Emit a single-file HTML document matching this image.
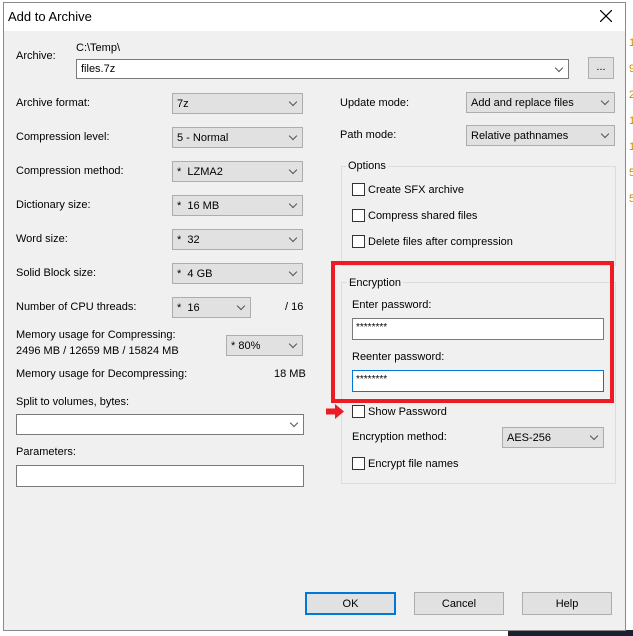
<!DOCTYPE html>
<html><head><meta charset="utf-8"><style>
*{box-sizing:border-box;margin:0;padding:0}
body{width:633px;height:636px;overflow:hidden;background:#fff;font-family:"Liberation Sans",sans-serif;font-size:11px;color:#000;position:relative}
.a{position:absolute;white-space:nowrap}
.win{position:absolute;left:3px;top:2px;width:623px;height:629px;background:#f0f0f0;border:1px solid #8a8a8a}
.title{position:absolute;left:0;top:0;width:621px;height:28px;background:#fff}
.cb{position:absolute;height:21px;background:#e1e1e1;border:1px solid #adadad;padding:4px 0 0 4px}
.cb.w{background:#fff;border-color:#7a7a7a}
.cb:after{content:"";position:absolute;right:6px;top:5px;width:5px;height:5px;border-right:1px solid #555;border-bottom:1px solid #555;transform:rotate(45deg)}
.in{position:absolute;height:22px;background:#fff;border:1px solid #7a7a7a;padding:3px 0 0 3px;font-size:10px}
.chk{position:absolute;width:13px;height:13px;background:#fff;border:1px solid #333}
.grp{position:absolute;border:1px solid #dcdcdc}
.btn{position:absolute;height:23px;background:#e1e1e1;border:1px solid #adadad;text-align:center;padding-top:5px}
</style></head><body>
<div class="a" style="left:629px;top:30px;color:#c80;font-size:11px;line-height:26px">1<br>9<br>2<br>1<br>1<br>5<br>5</div>
<div class="a" style="left:508px;top:630px;width:125px;height:6px;background:#1a2030"></div>
<div class="win">
<div class="title"></div>
</div>
<div class="a" style="left:8px;top:9px;font-size:13px">Add to Archive</div>
<svg class="a" style="left:600px;top:10px" width="12" height="12"><path d="M0 0L12 12M12 0L0 12" stroke="#000" stroke-width="1.2"/></svg>

<div class="a" style="left:16px;top:50px">Archive:</div>
<div class="a" style="left:76px;top:42px">C:\Temp\</div>
<div class="cb w" style="left:76px;top:59px;width:493px;height:20px;padding-top:3px">files.7z</div>
<div class="btn" style="left:588px;top:57px;width:26px;height:22px;padding-top:3px">...</div>

<div class="a" style="left:16px;top:97px">Archive format:</div>
<div class="cb" style="left:172px;top:93px;width:131px">7z</div>
<div class="a" style="left:16px;top:131px">Compression level:</div>
<div class="cb" style="left:172px;top:127px;width:131px">5 - Normal</div>
<div class="a" style="left:16px;top:165px">Compression method:</div>
<div class="cb" style="left:172px;top:161px;width:131px">*&nbsp; LZMA2</div>
<div class="a" style="left:16px;top:199px">Dictionary size:</div>
<div class="cb" style="left:172px;top:195px;width:131px">*&nbsp; 16 MB</div>
<div class="a" style="left:16px;top:233px">Word size:</div>
<div class="cb" style="left:172px;top:229px;width:131px">*&nbsp; 32</div>
<div class="a" style="left:16px;top:267px">Solid Block size:</div>
<div class="cb" style="left:172px;top:263px;width:131px">*&nbsp; 4 GB</div>
<div class="a" style="left:16px;top:301px">Number of CPU threads:</div>
<div class="cb" style="left:172px;top:297px;width:79px">*&nbsp; 16</div>
<div class="a" style="left:285px;top:301px">/ 16</div>
<div class="a" style="left:16px;top:329px">Memory usage for Compressing:</div>
<div class="a" style="left:16px;top:345px">2496 MB / 12659 MB / 15824 MB</div>
<div class="cb" style="left:226px;top:335px;width:77px">* 80%</div>
<div class="a" style="left:16px;top:368px">Memory usage for Decompressing:</div>
<div class="a" style="left:274px;top:368px">18 MB</div>
<div class="a" style="left:16px;top:396px">Split to volumes, bytes:</div>
<div class="cb w" style="left:16px;top:414px;width:288px"></div>
<div class="a" style="left:16px;top:446px">Parameters:</div>
<div class="in" style="left:16px;top:465px;width:288px"></div>

<div class="a" style="left:340px;top:97px">Update mode:</div>
<div class="cb" style="left:466px;top:92px;width:149px">Add and replace files</div>
<div class="a" style="left:340px;top:129px">Path mode:</div>
<div class="cb" style="left:466px;top:125px;width:149px">Relative pathnames</div>

<div class="grp" style="left:341px;top:166px;width:275px;height:100px"></div>
<div class="a" style="left:346px;top:160px;background:#f0f0f0;padding:0 2px">Options</div>
<div class="chk" style="left:352px;top:183px"></div><div class="a" style="left:368px;top:184px">Create SFX archive</div>
<div class="chk" style="left:352px;top:209px"></div><div class="a" style="left:368px;top:210px">Compress shared files</div>
<div class="chk" style="left:352px;top:235px"></div><div class="a" style="left:368px;top:236px">Delete files after compression</div>

<div class="grp" style="left:341px;top:282px;width:275px;height:202px"></div>
<div class="a" style="left:347px;top:277px;background:#f0f0f0;padding:0 2px">Encryption</div>
<div class="a" style="left:352px;top:299px">Enter password:</div>
<div class="in" style="left:352px;top:318px;width:252px">********</div>
<div class="a" style="left:352px;top:351px">Reenter password:</div>
<div class="in" style="left:352px;top:370px;width:252px;border-color:#0078d7">********</div>
<div class="chk" style="left:352px;top:405px"></div><div class="a" style="left:368px;top:406px">Show Password</div>
<div class="a" style="left:352px;top:431px">Encryption method:</div>
<div class="cb" style="left:502px;top:427px;width:102px">AES-256</div>
<div class="chk" style="left:352px;top:457px"></div><div class="a" style="left:368px;top:458px">Encrypt file names</div>

<div class="a" style="left:331px;top:261px;width:283px;height:142px;border:4px solid #ed1c24"></div>
<svg class="a" style="left:326px;top:404px" width="18" height="15"><path d="M0 4.5H9V0L18 7.5L9 15V10.5H0Z" fill="#ed1c24"/></svg>

<div class="btn" style="left:305px;top:592px;width:91px;border:2px solid #0078d7;padding-top:4px">OK</div>
<div class="btn" style="left:414px;top:592px;width:90px">Cancel</div>
<div class="btn" style="left:522px;top:592px;width:90px">Help</div>
</body></html>
